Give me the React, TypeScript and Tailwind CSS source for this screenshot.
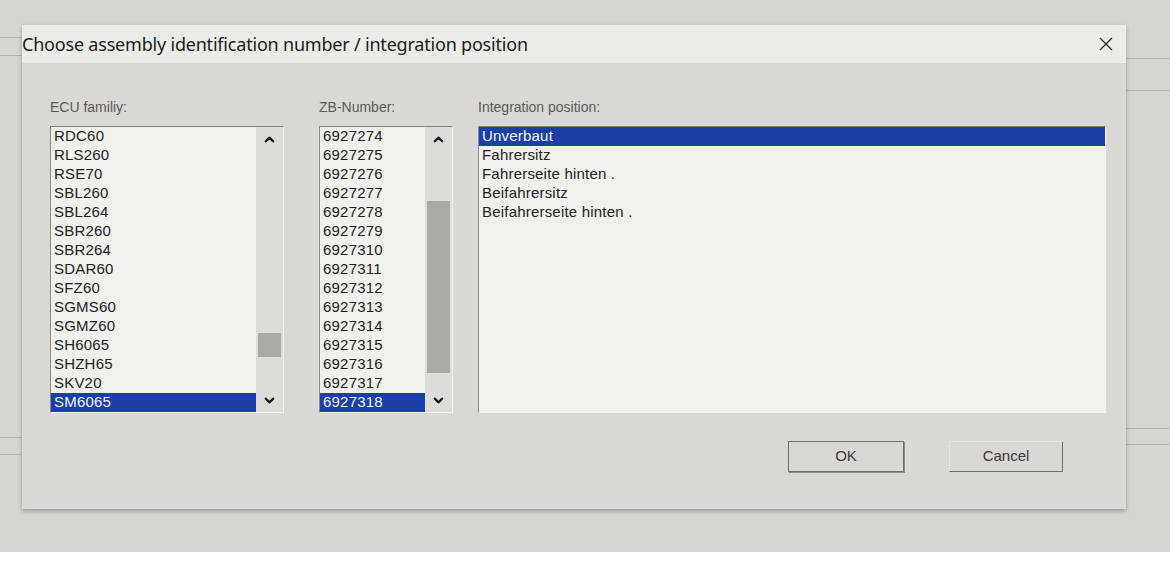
import { ChevronUp, ChevronDown } from "lucide-react";

const ecuFamilies = [
  "RDC60", "RLS260", "RSE70", "SBL260", "SBL264", "SBR260", "SBR264", "SDAR60",
  "SFZ60", "SGMS60", "SGMZ60", "SH6065", "SHZH65", "SKV20", "SM6065",
];

const zbNumbers = [
  "6927274", "6927275", "6927276", "6927277", "6927278", "6927279", "6927310",
  "6927311", "6927312", "6927313", "6927314", "6927315", "6927316", "6927317", "6927318",
];

const positions = [
  "Unverbaut",
  "Fahrersitz",
  "Fahrerseite hinten .",
  "Beifahrersitz",
  "Beifahrerseite hinten .",
];

type ListBoxProps = {
  items: string[];
  selected: number;
  width: string;
  thumbTop?: string;
  thumbHeight?: string;
  scroll?: boolean;
};

function ListBox({ items, selected, width, thumbTop, thumbHeight, scroll = true }: ListBoxProps) {
  return (
    <div className={`${width} h-[287px] flex border-t border-l border-t-[#7e7e7c] border-l-[#8a8a88] border-r border-b border-r-[#f2f2f0] border-b-[#f2f2f0] bg-[#f0f0ed]`}>
      {/* Items */}
      <div className="flex-1 flex flex-col overflow-hidden">
        {items.map((item, i) => (
          <div
            key={item}
            className={`h-[19px] leading-[18px] pl-[3px] text-[15px] tracking-[0.2px] whitespace-nowrap ${
              i === selected ? "bg-[#1b3fa6] text-[#f4f6ff]" : "text-[#222222]"
            }`}
          >
            {item}
          </div>
        ))}
      </div>

      {/* Scrollbar */}
      {scroll && (
        <div className="w-[27px] flex flex-col bg-[#dcdcd8]">
          <div className="h-[24px] flex items-center justify-center">
            <ChevronUp size={15} strokeWidth={3.5} className="text-[#1a1a1a]" />
          </div>
          <div className="flex-1 px-[2px]">
            <div className={`${thumbTop} ${thumbHeight} bg-[#a9a9a6]`} />
          </div>
          <div className="h-[24px] flex items-center justify-center">
            <ChevronDown size={15} strokeWidth={3.5} className="text-[#1a1a1a]" />
          </div>
        </div>
      )}
    </div>
  );
}

export default function App() {
  return (
    <div className="w-[1170px] h-[567px] flex flex-col bg-[#d5d5d2] overflow-hidden" style={{ fontFamily: '"Liberation Sans", Arial, sans-serif' }}>
      <div className="relative h-[552px]">
        {/* Windows behind the dialog */}
        <div className="absolute left-0 top-[37px] w-[30px] h-px bg-[#b3b3b0]" />
        <div className="absolute left-0 top-[55px] w-[30px] h-px bg-[#b3b3b0]" />
        <div className="absolute left-0 top-[437px] w-[30px] h-px bg-[#b3b3b0]" />
        <div className="absolute left-0 top-[454px] w-[30px] h-px bg-[#b3b3b0]" />
        <div className="absolute right-0 top-[58px] w-[45px] h-px bg-[#b3b3b0]" />
        <div className="absolute right-0 top-[90px] w-[45px] h-px bg-[#b3b3b0]" />
        <div className="absolute right-0 top-[428px] w-[45px] h-px bg-[#b3b3b0]" />
        <div className="absolute right-0 top-[444px] w-[45px] h-px bg-[#b3b3b0]" />

        {/* Dialog */}
        <div className="relative ml-[22px] mt-[25px] w-[1104px] h-[484px] flex flex-col bg-[#d9d8d5] shadow-[0_2px_4px_rgba(0,0,0,0.3)]">
          {/* Title bar */}
          <div className="h-[38px] flex items-center justify-between bg-[#ebebe8] pr-[13px]">
            <span className="text-[18px] text-[#1b1b1b] tracking-[-0.2px]" style={{ fontFamily: '"Noto Sans", "Open Sans", sans-serif' }}>
              Choose assembly identification number / integration position
            </span>
            <svg width="14" height="14" viewBox="0 0 14 14" className="text-[#2a2a2a]">
              <path d="M1 1L13 13M13 1L1 13" stroke="currentColor" strokeWidth="1.3" fill="none" />
            </svg>
          </div>

          {/* Body */}
          <div className="flex-1 flex flex-col pl-[28px] pr-[20px] pt-[35px]">
            <div className="flex">
              <div className="flex flex-col w-[234px]">
                <span className="h-[18px] leading-[18px] mb-[10px] text-[14px] text-[#5a5a58]">ECU familiy:</span>
                <ListBox items={ecuFamilies} selected={14} width="w-[234px]" thumbTop="mt-[182px]" thumbHeight="h-[24px]" />
              </div>
              <div className="flex flex-col w-[134px] ml-[35px]">
                <span className="h-[18px] leading-[18px] mb-[10px] text-[14px] text-[#5a5a58]">ZB-Number:</span>
                <ListBox items={zbNumbers} selected={14} width="w-[134px]" thumbTop="mt-[50px]" thumbHeight="h-[172px]" />
              </div>
              <div className="flex flex-col flex-1 ml-[25px]">
                <span className="h-[18px] leading-[18px] mb-[10px] text-[14px] text-[#5a5a58]">Integration position:</span>
                <ListBox items={positions} selected={0} width="w-full" scroll={false} />
              </div>
            </div>

            {/* Footer */}
            <div className="flex justify-end gap-[45px] mt-[28px] mr-[43px]">
              <button
                type="button"
                className="w-[116px] h-[31px] border border-[#6e6e6c] shadow-[1px_1px_0_#8a8a88] text-[15px] text-[#3a3a3a] bg-[#d9d8d5]"
              >
                OK
              </button>
              <button
                type="button"
                className="w-[114px] h-[31px] border border-t-[#e6e6e3] border-l-[#e6e6e3] border-r-[#6e6e6c] border-b-[#6e6e6c] text-[15px] text-[#3a3a3a] bg-[#d9d8d5]"
              >
                Cancel
              </button>
            </div>
          </div>
        </div>
      </div>
      <div className="h-[15px] bg-white" />
    </div>
  );
}
